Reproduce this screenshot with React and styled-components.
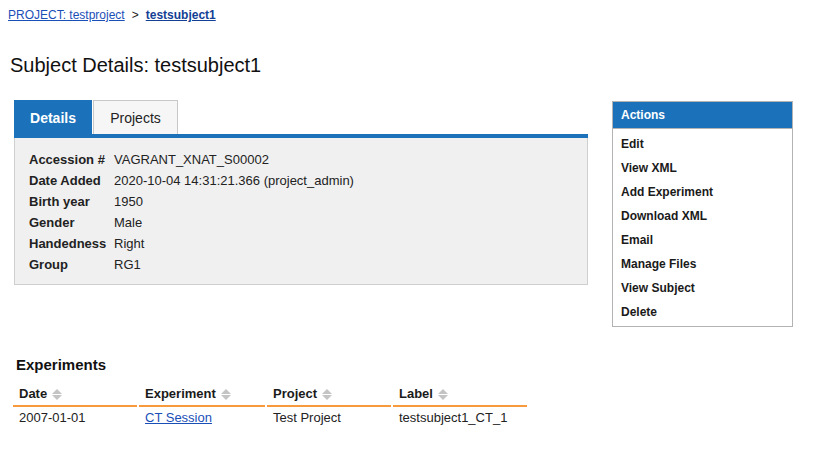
import React from "react";
import styled, { createGlobalStyle } from "styled-components";

const GlobalStyle = createGlobalStyle`
  body {
    margin: 0;
    background: #fff;
    font-family: "Liberation Sans", Arial, sans-serif;
    color: #222;
  }
`;

const Page = styled.div`
  padding: 7px 0 0 8px;
  width: 811px;
  box-sizing: border-box;
`;

const Crumbs = styled.div`
  font-size: 12px;
  line-height: 16px;
  display: flex;
  gap: 7px;
  align-items: center;
`;

const CrumbLink = styled.a`
  text-decoration: underline;
  font-weight: ${(p) => (p.$current ? "bold" : "normal")};
  color: ${(p) => (p.$current ? "#133f95" : "#1a4fb8")};
`;

const Title = styled.h1`
  margin: 30px 0 0 2px;
  font-size: 20px;
  font-weight: normal;
  line-height: 24px;
  color: #111;
`;

const Main = styled.div`
  display: flex;
  gap: 24px;
  margin: 23px 0 0 6px;
  align-items: flex-start;
`;

const Left = styled.div`
  width: 574px;
`;

const Tabs = styled.div`
  display: flex;
  border-bottom: 4px solid #1b72bb;
`;

const Tab = styled.div`
  height: 34px;
  box-sizing: border-box;
  display: flex;
  align-items: center;
  justify-content: center;
  font-size: 14px;
  padding: 0 16px;
  margin-right: 1px;
  width: ${(p) => p.$w}px;
  background: ${(p) => (p.$active ? "#1b72bb" : "#f6f6f6")};
  color: ${(p) => (p.$active ? "#fff" : "#222")};
  font-weight: ${(p) => (p.$active ? "bold" : "normal")};
  border: 1px solid ${(p) => (p.$active ? "#1b72bb" : "#c8c8c8")};
  border-bottom: none;
`;

const Panel = styled.div`
  background: #f0f0f0;
  border: 1px solid #cfcfcf;
  border-top: none;
  padding: 11px 14px 12px;
  height: 147px;
  box-sizing: border-box;
`;

const InfoGrid = styled.div`
  display: grid;
  grid-template-columns: 85px 1fr;
  font-size: 13px;
  line-height: 21px;
`;

const Label = styled.div`
  font-weight: bold;
  color: #222;
`;

const Value = styled.div`
  color: #222;
`;

const Actions = styled.div`
  width: 181px;
  border: 1px solid #b3b3b3;
  box-sizing: border-box;
  margin-top: 1px;
`;

const ActionsHead = styled.div`
  background: #1b72bb;
  color: #fff;
  font-weight: bold;
  font-size: 12px;
  height: 26px;
  display: flex;
  align-items: center;
  padding-left: 8px;
  border-bottom: 1px solid #b3b3b3;
`;

const ActionList = styled.div`
  padding: 3px 0 2px;
`;

const ActionItem = styled.div`
  font-size: 12px;
  font-weight: bold;
  line-height: 24px;
  padding-left: 8px;
  color: #1a1a1a;
`;

const Section = styled.div`
  margin: 29px 0 0 6px;
`;

const SectionTitle = styled.h2`
  font-size: 15px;
  font-weight: bold;
  margin: 0 0 8px 2px;
  line-height: 18px;
  color: #111;
`;

const Table = styled.table`
  border-collapse: separate;
  border-spacing: 2px 0;
  margin-left: -3px;
  font-size: 13px;
`;

const Th = styled.th`
  text-align: left;
  font-weight: bold;
  width: ${(p) => p.$w}px;
  padding: 3px 6px 3px;
  border-bottom: 2px solid #f79a3e;
  line-height: 17px;
  color: #1a1a1a;
  white-space: nowrap;
`;

const Td = styled.td`
  padding: 2px 6px 4px;
  line-height: 17px;
  color: #222;
`;

const Sort = styled.span`
  display: inline-flex;
  flex-direction: column;
  vertical-align: middle;
  margin-left: 5px;
  gap: 1px;
  &::before,
  &::after {
    content: "";
    width: 0;
    height: 0;
    border-left: 5px solid transparent;
    border-right: 5px solid transparent;
  }
  &::before {
    border-bottom: 5px solid #c4c4c4;
  }
  &::after {
    border-top: 5px solid #c4c4c4;
  }
`;

const CellLink = styled.a`
  color: #1a4fb8;
  text-decoration: underline;
`;

const details = [
  ["Accession #", "VAGRANT_XNAT_S00002"],
  ["Date Added", "2020-10-04 14:31:21.366 (project_admin)"],
  ["Birth year", "1950"],
  ["Gender", "Male"],
  ["Handedness", "Right"],
  ["Group", "RG1"],
];

const actions = [
  "Edit",
  "View XML",
  "Add Experiment",
  "Download XML",
  "Email",
  "Manage Files",
  "View Subject",
  "Delete",
];

const columns = [
  ["Date", 112],
  ["Experiment", 114],
  ["Project", 112],
  ["Label", 122],
];

const App = () => {
  return (
    <Page>
      <GlobalStyle />
      <Crumbs>
        <CrumbLink href="#">PROJECT: testproject</CrumbLink>
        <span>&gt;</span>
        <CrumbLink href="#" $current>
          testsubject1
        </CrumbLink>
      </Crumbs>
      <Title>Subject Details: testsubject1</Title>
      <Main>
        <Left>
          <Tabs>
            <Tab $active $w={78}>
              Details
            </Tab>
            <Tab $w={85}>Projects</Tab>
          </Tabs>
          <Panel>
            <InfoGrid>
              {details.map(([k, v]) => (
                <React.Fragment key={k}>
                  <Label>{k}</Label>
                  <Value>{v}</Value>
                </React.Fragment>
              ))}
            </InfoGrid>
          </Panel>
        </Left>
        <Actions>
          <ActionsHead>Actions</ActionsHead>
          <ActionList>
            {actions.map((a) => (
              <ActionItem key={a}>{a}</ActionItem>
            ))}
          </ActionList>
        </Actions>
      </Main>
      <Section>
        <SectionTitle>Experiments</SectionTitle>
        <Table>
          <thead>
            <tr>
              {columns.map(([h, w]) => (
                <Th key={h} $w={w}>
                  {h}
                  <Sort />
                </Th>
              ))}
            </tr>
          </thead>
          <tbody>
            <tr>
              <Td>2007-01-01</Td>
              <Td>
                <CellLink href="#">CT Session</CellLink>
              </Td>
              <Td>Test Project</Td>
              <Td>testsubject1_CT_1</Td>
            </tr>
          </tbody>
        </Table>
      </Section>
    </Page>
  );
};

export default App;
